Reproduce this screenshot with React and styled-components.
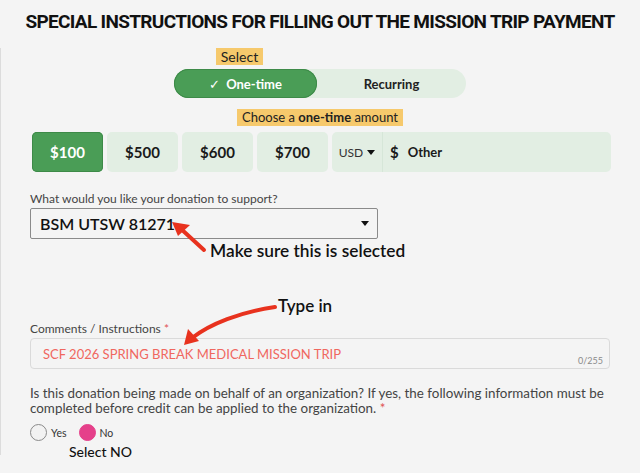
import styled, { createGlobalStyle } from "styled-components"

const GlobalStyle = createGlobalStyle`
  html, body {
    margin: 0;
    padding: 0;
    background: #f4f4f4;
  }
  body {
    font-family: Lato, "Noto Sans", sans-serif;
    color: #1a1a1a;
  }
  * { box-sizing: border-box; }
`

const Page = styled.div`
  position: relative;
  width: 640px;
  height: 473px;
  overflow: hidden;
  display: flex;
  flex-direction: column;
`

const Title = styled.h1`
  margin: 11px 0 0;
  text-align: center;
  font-family: Roboto, "Liberation Sans", sans-serif;
  font-size: 19px;
  font-weight: 700;
  letter-spacing: -0.67px;
  color: #111;
  line-height: 22px;
`

const Card = styled.div`
  display: flex;
  flex-direction: column;
  margin-top: 15px;
  height: 407px;
  border-left: 1px solid #dcdcdc;
  padding-left: 29px;
  > * { flex-shrink: 0; }
`

const Center = styled.div`
  display: flex;
  flex-direction: column;
  align-items: center;
  width: 580px;
`

const Highlight = styled.div`
  background: #f6c96c;
  font-size: ${(p) => p.$size || 13}px;
  line-height: 17px;
  padding: 0 5px;
  color: #222;
  margin-left: ${(p) => p.$shift || 0}px;
  margin-top: ${(p) => p.$top || 0}px;
  b { font-weight: 700; }
`

const Toggle = styled.div`
  display: flex;
  width: 292px;
  height: 29px;
  margin-top: 4px;
  border-radius: 15px;
  background: #e2eee3;
`

const ToggleOption = styled.div`
  flex: ${(p) => (p.$active ? "0 0 143px" : "1")};
  display: flex;
  align-items: center;
  justify-content: center;
  gap: 6px;
  border-radius: 15px;
  font-size: 13px;
  font-weight: 700;
  color: ${(p) => (p.$active ? "#fff" : "#222")};
  background: ${(p) => (p.$active ? "#4a9d56" : "transparent")};
  box-shadow: ${(p) => (p.$active ? "inset 0 0 0 1px #3d8a48" : "none")};
  span { font-weight: 400; }
`

const AmountRow = styled.div`
  display: flex;
  gap: 4px;
  margin: 6px 0 0 2px;
  height: 40px;
`

const AmountButton = styled.div`
  width: 71px;
  display: flex;
  align-items: center;
  justify-content: center;
  border-radius: 5px;
  font-size: 15px;
  font-weight: 700;
  color: ${(p) => (p.$active ? "#fff" : "#1a1a1a")};
  background: ${(p) => (p.$active ? "#4a9d56" : "#e2eee3")};
  box-shadow: ${(p) => (p.$active ? "inset 0 0 0 1px #3d8a48" : "none")};
`

const OtherBox = styled.div`
  width: 279px;
  display: flex;
  align-items: stretch;
  border-radius: 5px;
  background: #e2eee3;
`

const Currency = styled.div`
  width: 51px;
  display: flex;
  align-items: center;
  justify-content: center;
  gap: 4px;
  font-size: 12px;
  color: #333;
  border-right: 1px solid #d6e6d8;
`

const OtherInput = styled.div`
  display: flex;
  align-items: center;
  gap: 9px;
  padding-left: 7px;
  font-size: 13px;
  font-weight: 700;
  span { font-size: 15px; }
`

const FieldLabel = styled.div`
  font-size: 12px;
  color: #444;
  margin-top: ${(p) => p.$top || 0}px;
  line-height: 16px;
  em { color: #e05555; font-style: normal; }
`

const SelectBox = styled.div`
  width: 348px;
  height: 31px;
  margin-top: 1px;
  display: flex;
  align-items: center;
  justify-content: space-between;
  padding: 0 8px 0 9px;
  border: 1px solid #8a8a8a;
  border-radius: 2px;
  font-size: 16px;
  font-weight: 600;
  color: #111;
`

const Caret = styled.span`
  width: 0;
  height: 0;
  border-left: 4px solid transparent;
  border-right: 4px solid transparent;
  border-top: 5px solid #111;
`

const Note = styled.div`
  font-size: ${(p) => p.$size || 17.3}px;
  font-weight: ${(p) => p.$weight || 600};
  color: #111;
  line-height: ${(p) => p.$lh || 22}px;
  margin-left: ${(p) => p.$left || 0}px;
  margin-top: ${(p) => p.$top || 0}px;
`

const TextArea = styled.div`
  position: relative;
  width: 580px;
  height: 31px;
  margin-top: 1px;
  display: flex;
  align-items: center;
  padding-left: 12px;
  border: 1px solid #dadada;
  border-radius: 4px;
  font-size: 13px;
  color: #f0675f;
`

const Counter = styled.span`
  position: absolute;
  right: 6px;
  bottom: 2px;
  font-size: 9px;
  color: #8a8a8a;
`

const Question = styled.div`
  margin-top: 17px;
  font-size: 13.4px;
  line-height: 15px;
  color: #444;
  white-space: nowrap;
  em { color: #e05555; font-style: normal; }
`

const RadioRow = styled.div`
  display: flex;
  align-items: center;
  gap: 12px;
  margin-top: 8px;
  height: 17px;
`

const RadioItem = styled.label`
  display: flex;
  align-items: center;
  gap: 4px;
  font-size: 10.5px;
  color: #333;
`

const RadioDot = styled.span`
  width: 17px;
  height: 17px;
  border-radius: 50%;
  border: 1px solid ${(p) => (p.$on ? "#e5408a" : "#8a8a8a")};
  background: ${(p) => (p.$on ? "#e5408a" : "#f2f2f2")};
`

const Arrows = styled.svg`
  position: absolute;
  left: 0;
  top: 0;
  pointer-events: none;
`

const amounts = ["$100", "$500", "$600", "$700"]

export default function App() {
  return (
    <Page>
      <GlobalStyle />
      <Title>SPECIAL INSTRUCTIONS FOR FILLING OUT THE MISSION TRIP PAYMENT</Title>
      <Card>
        <Center>
          <Highlight $shift={-161} $size={14}>Select</Highlight>
          <Toggle>
            <ToggleOption $active>
              <span>✓</span> One-time
            </ToggleOption>
            <ToggleOption>Recurring</ToggleOption>
          </Toggle>
          <Highlight $top={11}>
            Choose a <b>one-time</b> amount
          </Highlight>
        </Center>
        <AmountRow>
          {amounts.map((a, i) => (
            <AmountButton key={a} $active={i === 0}>{a}</AmountButton>
          ))}
          <OtherBox>
            <Currency>
              USD <Caret />
            </Currency>
            <OtherInput>
              <span>$</span> Other
            </OtherInput>
          </OtherBox>
        </AmountRow>
        <FieldLabel $top={19}>What would you like your donation to support?</FieldLabel>
        <SelectBox>
          BSM UTSW 81271
          <Caret />
        </SelectBox>
        <Note $left={180} $top={1}>Make sure this is selected</Note>
        <Note $left={248} $top={33} $size={17}>Type in</Note>
        <FieldLabel $top={4}>
          Comments / Instructions <em>*</em>
        </FieldLabel>
        <TextArea>
          SCF 2026 SPRING BREAK MEDICAL MISSION TRIP
          <Counter>0/255</Counter>
        </TextArea>
        <Question>
          Is this donation being made on behalf of an organization? If yes, the following information must be
          <br />
          completed before credit can be applied to the organization. <em>*</em>
        </Question>
        <RadioRow>
          <RadioItem>
            <RadioDot /> Yes
          </RadioItem>
          <RadioItem>
            <RadioDot $on /> No
          </RadioItem>
        </RadioRow>
        <Note $left={39} $top={2} $size={14} $weight={500} $lh={18}>Select NO</Note>
      </Card>
      <Arrows width="640" height="473" viewBox="0 0 640 473">
        <path d="M204 250 L180 228" stroke="#e8321e" strokeWidth="4" strokeLinecap="round" fill="none" />
        <path d="M172 222 L190 225 L178 236 Z" fill="#e8321e" />
        <path d="M275 307 C240 312 210 324 192 338" stroke="#e8321e" strokeWidth="4" strokeLinecap="round" fill="none" />
        <path d="M184 345 L188 329 L199 341 Z" fill="#e8321e" />
      </Arrows>
    </Page>
  )
}
